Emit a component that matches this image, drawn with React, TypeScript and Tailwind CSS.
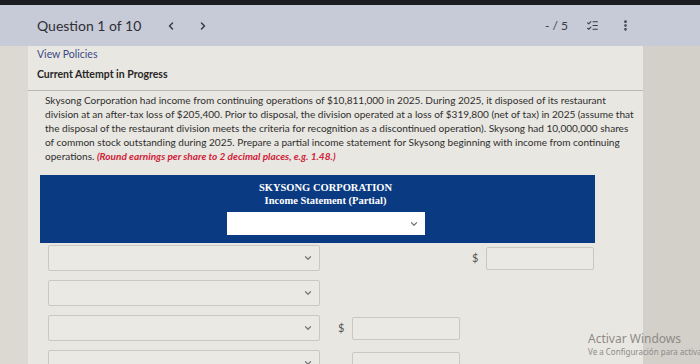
import { ChevronDown, ChevronLeft, ChevronRight, ListChecks, MoreVertical } from "lucide-react";

function Select({ className = "" }: { className?: string }) {
  return (
    <div
      className={`flex items-center justify-end rounded-[2px] border border-[#cbc7c1] bg-[#ebe9e4] pr-1.5 ${className}`}
    >
      <ChevronDown size={10} strokeWidth={3} className="text-[#7a7a7a]" />
    </div>
  );
}

function Amount({ show = true, sign = true }: { show?: boolean; sign?: boolean }) {
  return (
    <div className="flex w-[122px] items-center gap-[6px]">
      {show && (
        <>
          <span className="w-[8px] text-[11px] text-[#555]">{sign ? "$" : ""}</span>
          <div className="h-[23px] w-[108px] rounded-[2px] border border-[#cbc7c1] bg-[#ebe9e4]" />
        </>
      )}
    </div>
  );
}

export default function App() {
  const rows = [
    { mid: false, right: true, sign: true },
    { mid: false, right: false, sign: true },
    { mid: true, right: false, sign: true },
    { mid: true, right: false, sign: false },
  ];

  return (
    <main
      className="relative h-[364px] w-[700px] overflow-hidden bg-[#dcd9d3] text-[#2b2b2b]"
      style={{ fontFamily: "Lato, 'Open Sans', sans-serif" }}
    >
      <div className="h-[5px] bg-[#1c1d22]" />

      <header className="flex h-[41px] items-center bg-[#c7cad7] pl-[37px] pr-[68px]">
        <span className="text-[14px] text-[#2f2f35]">Question 1 of 10</span>
        <ChevronLeft size={12} strokeWidth={3} className="ml-[24px] text-[#3a3a44]" />
        <ChevronRight size={12} strokeWidth={3} className="ml-[20px] text-[#3a3a44]" />
        <div className="ml-auto flex items-center text-[#3a3a44]">
          <span className="text-[12px]">- / 5</span>
          <ListChecks size={13} strokeWidth={2} className="ml-[18px]" />
          <MoreVertical size={13} strokeWidth={3} className="ml-[20px]" />
        </div>
      </header>

      <div className="flex">
        <section className="ml-[28px] w-[615px] bg-[#e9e7e1] pb-[20px]">
          <div className="px-[9px] pt-0">
            <div className="text-[10.5px] leading-[16px] text-[#3b4a86]">View Policies</div>
            <div className="mt-[4px] text-[10.5px] font-bold leading-[16px] text-[#262626]">
              Current Attempt in Progress
            </div>
          </div>
          <div className="mt-[8px] border-t border-[#b9b6b0]" />

          <p className="ml-[17px] mt-[2px] whitespace-nowrap text-[10.05px] leading-[14px] text-[#2e2e2e]">
            Skysong Corporation had income from continuing operations of $10,811,000 in 2025. During 2025, it disposed of its restaurant
            <br />
            division at an after-tax loss of $205,400. Prior to disposal, the division operated at a loss of $319,800 (net of tax) in 2025 (assume that
            <br />
            the disposal of the restaurant division meets the criteria for recognition as a discontinued operation). Skysong had 10,000,000 shares
            <br />
            of common stock outstanding during 2025. Prepare a partial income statement for Skysong beginning with income from continuing
            <br />
            operations.{" "}
            <span className="font-bold italic text-[#d0223a]">
              (Round earnings per share to 2 decimal places, e.g. 1.48.)
            </span>
          </p>

          <div className="ml-[12px] mt-[12px] flex h-[68px] w-[555px] flex-col items-center bg-[#0a3a82] pl-[16px] pt-[6px] text-white">
            <div
              className="text-[10.5px] font-bold leading-[13px]"
              style={{ fontFamily: "'Liberation Serif', 'DejaVu Serif', serif" }}
            >
              SKYSONG CORPORATION
            </div>
            <div
              className="text-[10.5px] font-bold leading-[13px]"
              style={{ fontFamily: "'Liberation Serif', 'DejaVu Serif', serif" }}
            >
              Income Statement (Partial)
            </div>
            <div className="mt-[5px] flex h-[23px] w-[198px] items-center justify-end bg-white pr-1.5">
              <ChevronDown size={10} strokeWidth={3} className="text-[#7a7a7a]" />
            </div>
          </div>

          <div className="ml-[20px] mt-[2px] flex flex-col gap-[9px]">
            {rows.map((r, i) => (
              <div key={i} className="flex items-center">
                <Select className="h-[26px] w-[272px]" />
                <div className="ml-[18px]">
                  <Amount show={r.mid} sign={r.sign} />
                </div>
                <div className="ml-[12px]">
                  <Amount show={r.right} sign={r.sign} />
                </div>
              </div>
            ))}
          </div>
        </section>
        <div className="flex-1 bg-[#d3d0ca]" />
      </div>

      <div className="absolute left-[588px] top-[331px] text-[#8d8b88]" style={{ fontFamily: "'Noto Sans', sans-serif" }}>
        <div className="text-[12px] leading-[15px]">Activar Windows</div>
        <div className="whitespace-nowrap text-[8px] leading-[12px]">Ve a Configuración para activar Windows.</div>
      </div>
    </main>
  );
}
